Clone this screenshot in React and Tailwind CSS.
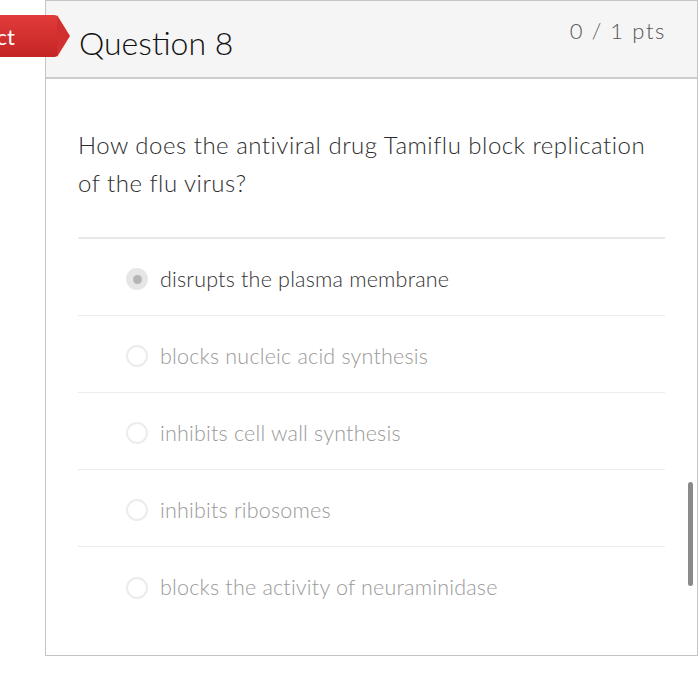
import React from 'react';

const answers = [
  { text: 'disrupts the plasma membrane', selected: true },
  { text: 'blocks nucleic acid synthesis' },
  { text: 'inhibits cell wall synthesis' },
  { text: 'inhibits ribosomes' },
  { text: 'blocks the activity of neuraminidase' },
];

function Radio({ selected }) {
  if (selected) {
    return (
      <span className="flex h-[22px] w-[22px] items-center justify-center rounded-full bg-[#e6e6e6]">
        <span className="h-[9px] w-[9px] rounded-full bg-[#b5b5b5]" />
      </span>
    );
  }
  return <span className="h-[22px] w-[22px] rounded-full border-2 border-[#ececec] bg-white" />;
}

export default function App() {
  return (
    <div
      className="relative h-[684px] w-[700px] overflow-hidden bg-white"
      style={{ fontFamily: 'Lato, "Open Sans", sans-serif' }}
    >
      <div className="ml-[45px] mr-[2px] border border-[#c4c4c4]">
        <div className="flex h-[78px] justify-between border-b-2 border-[#cccccc] bg-[#f5f5f5] pl-[33px] pr-[31px]">
          <h2 className="pt-[22px] text-[32px] font-light leading-[40px] text-[#111]">Question 8</h2>
          <span className="pt-[16px] text-[22px] font-light leading-[28px] tracking-[1.6px] text-[#555]">
            0 / 1 pts
          </span>
        </div>

        <div className="px-[32px] pb-[31px] pt-[47px]">
          <p className="pb-[35px] text-[24px] font-light leading-[38px] tracking-[0.5px] text-[#2d2d2d]">
            How does the antiviral drug Tamiflu block replication of the flu virus?
          </p>
          <div className="border-t-2 border-[#e8e8e8]">
            {answers.map((answer, i) => (
              <div
                key={answer.text}
                className={`flex h-[77px] items-center gap-[12px] pl-[48px] pt-[4px] ${
                  i < answers.length - 1 ? 'border-b border-[#ececec]' : ''
                }`}
              >
                <Radio selected={answer.selected} />
                <span
                  className={`text-[21.5px] font-light tracking-[0.2px] ${
                    answer.selected ? 'text-[#333]' : 'text-[#999]'
                  }`}
                >
                  {answer.text}
                </span>
              </div>
            ))}
          </div>
        </div>
      </div>

      {/* result tag */}
      <div className="absolute left-0 top-[15px] flex h-[42px] items-center">
        <div className="flex h-full w-[58px] items-center justify-end rounded-r-sm bg-gradient-to-b from-[#e23b3b] to-[#c42424] pr-[43px] text-[22px] text-white">
          <span className="-ml-[40px]">Incorrect</span>
        </div>
        <svg width="13" height="42" viewBox="0 0 13 42" className="-ml-px">
          <path d="M0 0 L13 21 L0 42 Z" fill="#d23030" />
        </svg>
      </div>

      {/* scrollbar */}
      <div className="absolute left-[688px] top-[482px] h-[104px] w-[5px] rounded-full bg-[#8a8a8a]" />
    </div>
  );
}
